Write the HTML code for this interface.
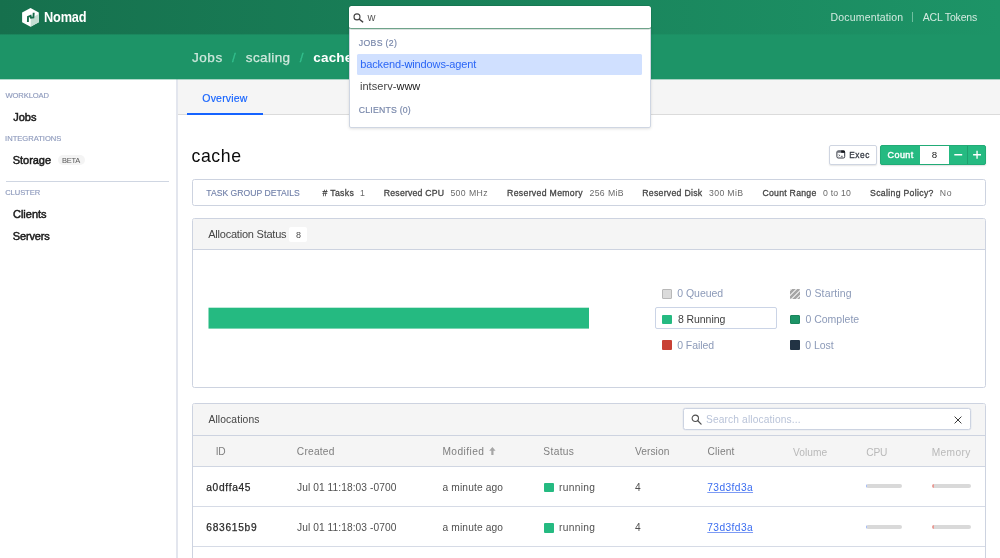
<!DOCTYPE html>
<html lang="en">
<head>
<meta charset="utf-8">
<title>Nomad - cache</title>
<style>
*{box-sizing:border-box;margin:0;padding:0}
html,body{width:1000px;height:558px;overflow:hidden;background:#fff}
body{font-family:"Liberation Sans",Arial,sans-serif;color:#0a0a0a;position:relative;font-size:10px}
.a{position:absolute}
.t{position:absolute;white-space:nowrap;line-height:1;z-index:1}
#app{position:absolute;left:0;top:0;width:1000px;height:558px;overflow:hidden;will-change:transform}
</style>
</head>
<body>
<div id="app">
<!-- navigation bars -->
<div class="a" style="left:0;top:34px;width:1000px;height:45px;background:#1d9467"></div>
<div class="a" style="left:0;top:79px;width:1000px;height:1px;background:#1d9467;opacity:.35;z-index:1"></div>
<div class="a" style="left:0;top:34px;width:1000px;height:1px;background:linear-gradient(90deg,#16704d 0%,#1d9467 100%);opacity:.4"></div>
<div class="a" style="left:0;top:0;width:1000px;height:34px;background:linear-gradient(90deg,#16704d 0%,#1d9467 100%)"></div>
<!-- sidebar -->
<div class="a" style="left:176px;top:79px;width:2px;height:480px;background:#e3e6ee"></div>
<div class="a" style="left:57.6px;top:154.9px;width:27.7px;height:10.5px;border-radius:5.3px;background:#f4f4f4"></div>
<div class="a" style="left:5.6px;top:181.3px;width:163.7px;height:1px;background:#cfd6e2"></div>
<!-- tabs -->
<div class="a" style="left:178px;top:79px;width:822px;height:36px;background:#f5f5f5;border-bottom:1px solid #dbdbdb"></div>
<div class="a" style="left:187.3px;top:112.8px;width:75.4px;height:2.1px;background:#1563ff"></div>

<!-- logo -->
<svg class="a" style="left:21px;top:7px" width="19" height="21" viewBox="0 0 19 21">
<path d="M9.55 1 L17.8 5.5 L17.8 15.3 L9.55 19.8 L1.1 15.3 L1.1 5.5 Z" fill="#fff"/>
<path d="M9.8 11.3 L17.8 6.9 L17.8 15.3 L9.55 19.8 Z" fill="#c4ded3"/>
<path d="M6.9 14.9 L7 9.9 L9.6 8.9 L10 10.7 L12.4 10.4 L12.7 5.8" fill="none" stroke="#166b4a" stroke-width="1.9" stroke-linejoin="miter"/>
</svg>
<div class="t" style="left:43.7px;top:9.9px;font-size:14.6px;font-weight:bold;color:#fff;transform-origin:0 0;transform:scaleX(.875);letter-spacing:-.2px">Nomad</div>
<div class="a" style="left:912.2px;top:12.4px;width:1px;height:10.1px;background:#6fbf9f"></div>

<!-- exec + count controls -->
<div class="a" style="left:829px;top:145px;width:47.5px;height:19.6px;border:1px solid #cfd5e1;border-radius:2px;background:#fff;box-shadow:0 1px 1.5px rgba(10,10,10,.1)"></div>
<svg class="a" style="left:835.8px;top:150.4px" width="10" height="9" viewBox="0 0 10 9"><rect x="0.9" y="0.9" width="7.8" height="7.1" rx="1.3" fill="none" stroke="#343842" stroke-width="1"/><path d="M0.9 2.7 V2 Q0.9 0.9 2 0.9 H7.6 Q8.7 0.9 8.7 2 V2.7 Z" fill="#6d717a"/><path d="M5.2 0.6 H7.7 Q9 0.6 9 1.9 V2.7 H5.2 Z" fill="#15171c"/><path d="M2.7 4.6 L3.7 5.4 L2.7 6.2" stroke="#343842" stroke-width=".8" fill="none"/><path d="M4.9 6.3 H6.7" stroke="#343842" stroke-width=".8" fill="none"/></svg>
<div class="a" style="left:880px;top:145px;width:106px;height:19.6px;border-radius:2px;background:#25ba81;border:1px solid #21ab76;box-shadow:0 1px 1.5px rgba(10,10,10,.12)"></div>
<div class="a" style="left:920px;top:146px;width:28.6px;height:17.8px;background:#fff"></div>
<div class="a" style="left:967px;top:146px;width:1px;height:18px;background:#1fa06f"></div>
<svg class="a" style="left:950px;top:147px" width="35" height="16" viewBox="0 0 35 16"><path d="M4.3 7.7 H12.2 M23.1 7.7 H31 M27.05 3.7 V11.7" stroke="#fff" stroke-width="1.35" fill="none"/></svg>

<!-- task group details -->
<div class="a" style="left:192px;top:179px;width:794px;height:27px;border:1px solid #cdd3e0;border-radius:2.5px;background:#fff"></div>

<!-- allocation status -->
<div class="a" style="left:192px;top:218px;width:794px;height:170px;border:1px solid #cdd3e0;border-radius:2.5px;background:#fff;overflow:hidden">
  <div class="a" style="left:0;top:0;right:0;height:31px;background:#f5f5f5;border-bottom:1px solid #cdd3e0"></div>
</div>
<div class="a" style="left:289.4px;top:227.1px;width:17.7px;height:15.1px;background:#fff;border-radius:2px"></div>
<svg class="a" style="left:206px;top:305px" width="386" height="26" viewBox="0 0 386 26"><rect x="2.5" y="2.7" width="380.5" height="20.9" fill="#25ba81"/></svg>
<div class="a" style="left:654.8px;top:307.1px;width:122.7px;height:21.8px;border:1px solid #cbd4e6;border-radius:2px;background:#fff"></div>
<div class="a" style="left:662.2px;top:288.7px;width:10px;height:10px;background:#dbdbdb;border:1px solid #b8b8b8;border-radius:1px"></div>
<div class="a" style="left:790.2px;top:288.7px;width:10px;height:10px;border-radius:1px;background:repeating-linear-gradient(135deg,#dedede 0 1.8px,#a6a6a6 1.8px 3.6px)"></div>
<div class="a" style="left:662.4px;top:314.6px;width:9.8px;height:9.6px;background:#25ba81;border-radius:1px"></div>
<div class="a" style="left:790.2px;top:314.6px;width:10px;height:9.6px;background:#1d9467;border:1px solid #1a855c;border-radius:1px"></div>
<div class="a" style="left:662.2px;top:340.3px;width:10px;height:9.8px;background:#c84034;border-radius:1px"></div>
<div class="a" style="left:790.2px;top:340.3px;width:10px;height:9.8px;background:#223344;border-radius:1px"></div>

<!-- allocations -->
<div class="a" style="left:192px;top:403px;width:794px;height:170px;border:1px solid #cdd3e0;border-radius:2.5px 2.5px 0 0;background:#fff;overflow:hidden">
  <div class="a" style="left:0;top:0;right:0;height:63px;background:#f5f5f5;border-bottom:1px solid #d0d6e2"></div>
  <div class="a" style="left:0;right:0;top:31px;height:1px;background:#cdd3e0"></div>
  <div class="a" style="left:0;right:0;top:102px;height:1px;background:#d6dbe6"></div>
  <div class="a" style="left:0;right:0;top:142px;height:1px;background:#d6dbe6"></div>
</div>
<div class="a" style="left:683px;top:408px;width:288px;height:22px;border:1px solid #ccd3e1;border-radius:2.5px;background:#fff;box-shadow:0 0 0 .5px #e4e7ee"></div>
<svg class="a" style="left:691px;top:413.8px" width="11" height="11" viewBox="0 0 11 11"><circle cx="4.3" cy="4.3" r="3.2" fill="none" stroke="#4f4f4f" stroke-width="1.05"/><path d="M6.8 6.8 L10.1 10.1" stroke="#4f4f4f" stroke-width="1.25" stroke-linecap="round"/></svg>
<svg class="a" style="left:953.5px;top:415.8px" width="8" height="8" viewBox="0 0 8 8"><path d="M0.6 0.6 L7.4 7.4 M7.4 0.6 L0.6 7.4" stroke="#3a3a3a" stroke-width="1"/></svg>
<svg class="a" style="left:489px;top:447px" width="7" height="9" viewBox="0 0 7 9"><path d="M3.4 0.1 L6.6 3.7 H4.5 V8.1 H2.3 V3.7 H0.2 Z" fill="#a6a6a6"/></svg>
<div class="a" style="left:544.4px;top:482.8px;width:9.6px;height:9.6px;background:#25ba81;border-radius:1px"></div>
<div class="a" style="left:544.4px;top:523px;width:9.6px;height:9.6px;background:#25ba81;border-radius:1px"></div>
<div class="a" style="left:866.3px;top:484.3px;width:36.1px;height:4.1px;border-radius:2px;background:linear-gradient(90deg,#9ab4f5 0,#9ab4f5 1.5px,#d9d9d9 1.5px)"></div>
<div class="a" style="left:931.9px;top:484.3px;width:38.8px;height:4.1px;border-radius:2px;background:linear-gradient(90deg,#e79a94 0,#e79a94 1.5px,#d9d9d9 1.5px)"></div>
<div class="a" style="left:866.3px;top:524.5px;width:36.1px;height:4.1px;border-radius:2px;background:linear-gradient(90deg,#9ab4f5 0,#9ab4f5 1.5px,#d9d9d9 1.5px)"></div>
<div class="a" style="left:931.9px;top:524.5px;width:38.8px;height:4.1px;border-radius:2px;background:linear-gradient(90deg,#e79a94 0,#e79a94 1.5px,#d9d9d9 1.5px)"></div>

<!-- global search dropdown -->
<div class="a" style="z-index:2;left:349px;top:27px;width:302px;height:101px;background:#fff;border:1px solid #cfd6e2;border-radius:0 0 2px 2px;box-shadow:0 1px 3px rgba(10,10,10,.12)"></div>
<div class="a" style="z-index:2;left:348.6px;top:5.6px;width:302.6px;height:23px;background:#fff;border-radius:2.5px;border-bottom:1px solid #6fa38a;box-shadow:0 0 0 .5px rgba(10,60,40,.3)"></div>
<svg class="a" style="z-index:3;left:352.6px;top:12.6px" width="11" height="10" viewBox="0 0 11 10"><circle cx="4" cy="3.9" r="3" fill="none" stroke="#444" stroke-width="1.1"/><path d="M6.3 6.2 L9.7 8.9" stroke="#444" stroke-width="1.4" stroke-linecap="round"/></svg>
<div class="a" style="z-index:2;left:357.1px;top:54.2px;width:285px;height:20.5px;background:#d0e0ff;border-radius:1.5px"></div>

<!-- text -->
<div class="t" style="left:830.60px;top:12.16px;font-size:10.5px;color:#d3eae0;letter-spacing:0.157px">Documentation</div>
<div class="t" style="left:922.78px;top:12.16px;font-size:10.5px;color:#d3eae0;letter-spacing:-0.171px">ACL Tokens</div>
<div class="t" style="left:191.92px;top:51.17px;font-size:13.5px;color:#cfe8dd;letter-spacing:0.595px;-webkit-text-stroke:.25px #cfe8dd">Jobs</div>
<div class="t" style="left:232.07px;top:51.17px;font-size:13.5px;color:#33bf8d;letter-spacing:0.000px;-webkit-text-stroke:.3px #33bf8d">/</div>
<div class="t" style="left:245.79px;top:51.17px;font-size:13.5px;color:#cfe8dd;letter-spacing:0.368px;-webkit-text-stroke:.25px #cfe8dd">scaling</div>
<div class="t" style="left:299.68px;top:51.17px;font-size:13.5px;color:#33bf8d;letter-spacing:0.000px;-webkit-text-stroke:.3px #33bf8d">/</div>
<div class="t" style="left:313.23px;top:51.17px;font-size:13.5px;color:#fff;letter-spacing:0.203px;font-weight:bold">cache</div>
<div class="t" style="left:5.43px;top:92.17px;font-size:7.6px;color:#8f9bbd;letter-spacing:-0.103px;-webkit-text-stroke:.15px #8f9bbd">WORKLOAD</div>
<div class="t" style="left:5.07px;top:135.02px;font-size:7.6px;color:#8f9bbd;letter-spacing:-0.004px;-webkit-text-stroke:.15px #8f9bbd">INTEGRATIONS</div>
<div class="t" style="left:5.22px;top:189.22px;font-size:7.6px;color:#8f9bbd;letter-spacing:-0.088px;-webkit-text-stroke:.15px #8f9bbd">CLUSTER</div>
<div class="t" style="left:13.18px;top:112.14px;font-size:11px;color:#1c1c1c;letter-spacing:0.038px;-webkit-text-stroke:.5px #1c1c1c">Jobs</div>
<div class="t" style="left:12.80px;top:155.19px;font-size:11px;color:#1c1c1c;letter-spacing:-0.046px;-webkit-text-stroke:.5px #1c1c1c">Storage</div>
<div class="t" style="left:62.03px;top:157.15px;font-size:7.5px;color:#5a5a5a;letter-spacing:-0.259px">BETA</div>
<div class="t" style="left:12.95px;top:209.24px;font-size:11px;color:#1c1c1c;letter-spacing:-0.002px;-webkit-text-stroke:.5px #1c1c1c">Clients</div>
<div class="t" style="left:12.84px;top:231.24px;font-size:11px;color:#1c1c1c;letter-spacing:-0.143px;-webkit-text-stroke:.5px #1c1c1c">Servers</div>
<div class="t" style="left:202.33px;top:93.21px;font-size:10.5px;color:#1563ff;letter-spacing:0.187px;-webkit-text-stroke:.15px #1563ff">Overview</div>
<div class="t" style="left:191.49px;top:147.97px;font-size:17.7px;color:#0a0a0a;letter-spacing:0.582px">cache</div>
<div class="t" style="left:849.34px;top:151.07px;font-size:8.3px;color:#363b45;letter-spacing:0.512px;-webkit-text-stroke:.3px #363b45">Exec</div>
<div class="t" style="left:887.59px;top:151.18px;font-size:9px;color:#fff;letter-spacing:0.424px;-webkit-text-stroke:.4px #fff">Count</div>
<div class="t" style="left:931.72px;top:150.24px;font-size:9.7px;color:#222;letter-spacing:0.000px">8</div>
<div class="t" style="left:206.26px;top:189.17px;font-size:8.6px;color:#6f7fa8;letter-spacing:0.023px;-webkit-text-stroke:.12px #6f7fa8">TASK GROUP DETAILS</div>
<div class="t" style="left:322.42px;top:189.09px;font-size:8.7px;color:#454545;letter-spacing:0.323px;-webkit-text-stroke:.28px #454545">#&nbsp;Tasks</div>
<div class="t" style="left:359.94px;top:189.09px;font-size:8.7px;color:#6a6a6a;letter-spacing:0.000px">1</div>
<div class="t" style="left:383.87px;top:189.09px;font-size:8.7px;color:#454545;letter-spacing:0.196px;-webkit-text-stroke:.28px #454545">Reserved CPU</div>
<div class="t" style="left:450.39px;top:189.09px;font-size:8.7px;color:#6a6a6a;letter-spacing:0.407px">500 MHz</div>
<div class="t" style="left:507.10px;top:189.09px;font-size:8.7px;color:#454545;letter-spacing:0.321px;-webkit-text-stroke:.28px #454545">Reserved Memory</div>
<div class="t" style="left:589.42px;top:189.09px;font-size:8.7px;color:#6a6a6a;letter-spacing:0.397px">256 MiB</div>
<div class="t" style="left:642.29px;top:189.09px;font-size:8.7px;color:#454545;letter-spacing:0.281px;-webkit-text-stroke:.28px #454545">Reserved Disk</div>
<div class="t" style="left:708.97px;top:189.09px;font-size:8.7px;color:#6a6a6a;letter-spacing:0.373px">300 MiB</div>
<div class="t" style="left:762.53px;top:189.09px;font-size:8.7px;color:#454545;letter-spacing:0.251px;-webkit-text-stroke:.28px #454545">Count Range</div>
<div class="t" style="left:822.94px;top:189.09px;font-size:8.7px;color:#6a6a6a;letter-spacing:0.232px">0 to 10</div>
<div class="t" style="left:870.11px;top:189.09px;font-size:8.7px;color:#454545;letter-spacing:0.311px;-webkit-text-stroke:.28px #454545">Scaling Policy?</div>
<div class="t" style="left:939.85px;top:189.09px;font-size:8.7px;color:#6a6a6a;letter-spacing:0.601px">No</div>
<div class="t" style="left:208.24px;top:229.09px;font-size:11px;color:#454545;letter-spacing:-0.224px">Allocation Status</div>
<div class="t" style="left:295.96px;top:231.08px;font-size:9px;color:#4a4a4a;letter-spacing:0.000px">8</div>
<div class="t" style="left:677.29px;top:288.21px;font-size:10.5px;color:#8c9ab8;letter-spacing:-0.040px">0 Queued</div>
<div class="t" style="left:805.45px;top:288.21px;font-size:10.5px;color:#8c9ab8;letter-spacing:0.138px">0 Starting</div>
<div class="t" style="left:677.95px;top:314.01px;font-size:10.5px;color:#404040;letter-spacing:-0.068px">8 Running</div>
<div class="t" style="left:805.43px;top:314.01px;font-size:10.5px;color:#8c9ab8;letter-spacing:0.002px">0 Complete</div>
<div class="t" style="left:677.26px;top:340.16px;font-size:10.5px;color:#8c9ab8;letter-spacing:-0.084px">0 Failed</div>
<div class="t" style="left:805.28px;top:340.16px;font-size:10.5px;color:#8c9ab8;letter-spacing:-0.045px">0 Lost</div>
<div class="t" style="left:208.46px;top:415.03px;font-size:10.3px;color:#454545;letter-spacing:0.112px">Allocations</div>
<div class="t" style="left:706.02px;top:415.17px;font-size:10.2px;color:#b9c3d8;letter-spacing:0.137px">Search allocations...</div>
<div class="t" style="left:215.64px;top:447.17px;font-size:10.2px;color:#7f7f7f;letter-spacing:-0.258px">ID</div>
<div class="t" style="left:296.84px;top:447.17px;font-size:10.2px;color:#7f7f7f;letter-spacing:0.213px">Created</div>
<div class="t" style="left:442.39px;top:447.17px;font-size:10.2px;color:#7f7f7f;letter-spacing:0.440px">Modified</div>
<div class="t" style="left:543.34px;top:447.17px;font-size:10.2px;color:#7f7f7f;letter-spacing:0.345px">Status</div>
<div class="t" style="left:634.96px;top:447.17px;font-size:10.2px;color:#7f7f7f;letter-spacing:0.060px">Version</div>
<div class="t" style="left:707.57px;top:447.17px;font-size:10.2px;color:#7f7f7f;letter-spacing:0.143px">Client</div>
<div class="t" style="left:792.91px;top:448.17px;font-size:10.2px;color:#b9b9b9;letter-spacing:0.059px">Volume</div>
<div class="t" style="left:866.26px;top:448.17px;font-size:10.2px;color:#b9b9b9;letter-spacing:-0.155px">CPU</div>
<div class="t" style="left:931.72px;top:448.17px;font-size:10.2px;color:#b9b9b9;letter-spacing:0.367px">Memory</div>
<div class="t" style="left:206.23px;top:483.17px;font-size:10.2px;color:#2a2a2a;letter-spacing:0.691px;-webkit-text-stroke:.25px #2a2a2a">a0dffa45</div>
<div class="t" style="left:296.97px;top:483.17px;font-size:10.2px;color:#505050;letter-spacing:0.079px">Jul 01 11:18:03 -0700</div>
<div class="t" style="left:442.53px;top:483.17px;font-size:10.2px;color:#505050;letter-spacing:0.141px">a minute ago</div>
<div class="t" style="left:559.01px;top:483.17px;font-size:10.2px;color:#505050;letter-spacing:0.330px">running</div>
<div class="t" style="left:634.92px;top:483.12px;font-size:10.2px;color:#505050;letter-spacing:0.000px">4</div>
<div class="t" style="left:707.29px;top:483.17px;font-size:10.2px;color:#3a6cf0;letter-spacing:0.406px;text-decoration:underline;text-decoration-thickness:.6px;text-underline-offset:1.2px;text-decoration-color:#7d9bf5">73d3fd3a</div>
<div class="t" style="left:206.30px;top:523.12px;font-size:10.2px;color:#2a2a2a;letter-spacing:0.722px;-webkit-text-stroke:.25px #2a2a2a">683615b9</div>
<div class="t" style="left:296.97px;top:523.12px;font-size:10.2px;color:#505050;letter-spacing:0.079px">Jul 01 11:18:03 -0700</div>
<div class="t" style="left:442.53px;top:523.12px;font-size:10.2px;color:#505050;letter-spacing:0.141px">a minute ago</div>
<div class="t" style="left:559.01px;top:523.12px;font-size:10.2px;color:#505050;letter-spacing:0.330px">running</div>
<div class="t" style="left:634.92px;top:523.12px;font-size:10.2px;color:#505050;letter-spacing:0.000px">4</div>
<div class="t" style="left:707.29px;top:523.12px;font-size:10.2px;color:#3a6cf0;letter-spacing:0.406px;text-decoration:underline;text-decoration-thickness:.6px;text-underline-offset:1.2px;text-decoration-color:#7d9bf5">73d3fd3a</div>
<div class="t" style="left:367.45px;top:12.14px;font-size:11px;color:#555;letter-spacing:0.000px;z-index:3">w</div>
<div class="t" style="left:358.80px;top:39.14px;font-size:8.7px;color:#7988ab;letter-spacing:0.335px;z-index:3;-webkit-text-stroke:.18px #7988ab">JOBS (2)</div>
<div class="t" style="left:360.17px;top:59.24px;font-size:11px;color:#2b66f6;letter-spacing:-0.123px;z-index:3">backend-<b style="font-weight:normal;color:#1558f0">w</b>indows-agent</div>
<div class="t" style="left:359.96px;top:81.24px;font-size:11px;color:#444;letter-spacing:0.046px;z-index:3">intserv-<b style="font-weight:normal;color:#161616">www</b></div>
<div class="t" style="left:358.69px;top:106.24px;font-size:8.7px;color:#7988ab;letter-spacing:0.233px;z-index:3;-webkit-text-stroke:.18px #7988ab">CLIENTS (0)</div>

</div>
</body>
</html>
